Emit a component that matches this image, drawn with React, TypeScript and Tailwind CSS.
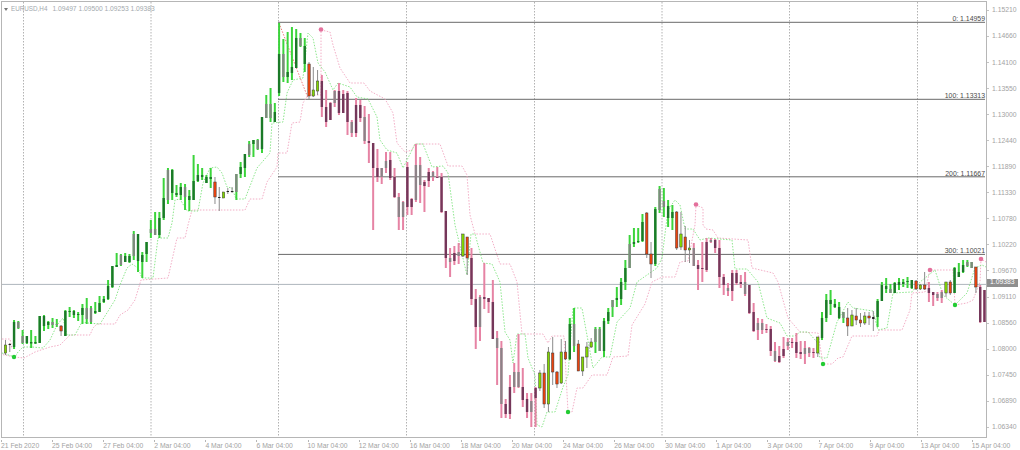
import React from 'react';

type Kind = 'g' | 'h' | 'p' | 'q' | 'l' | 'r' | 'k';
// kind, wick top, body top, body bottom, wick bottom (page pixels)
type Candle = [Kind, number, number, number, number];

const candles: Candle[] = [
  ['l',340,345,353,355],['k',343,344,345,352],['g',320,322,347,349],['h',321,322,328,329],['h',330,336,343,344],
  ['g',336,336,343,344],['g',330,342,343.5,348],['g',336,342,343.5,344],['g',316,316,343,343],['g',315,316,326,331],
  ['g',321,322,325,329],['h',318,322,325,328],['h',319,324,325,327],['r',325,326,331,336],['g',310,311,336,336],
  ['g',307,311,312,317],['g',310,311,315,318],['g',312,314,315,321],['g',304,308,315,324],['h',298,308,319,324],
  ['h',306,308,322,324],['g',302,311,313,314],['g',296,303,312,312],['g',296,299,302,303],['g',280,286,299,300],
  ['g',266,266,287,288],['g',253,265,267,267],['h',254,255,265,266],['g',253,256,262,262],['g',254,256,262,263],
  ['h',231,234,256,260],['g',234,234,261,272],['g',252,255,262,278],['g',242,242,254,262],['h',220,229,233,238],
  ['h',212,229,235,235],['g',212,218,235,238],['g',178,198,218,220],['h',168,170,200,204],['g',169,170,193,200],
  ['g',185,193,195,197],['g',183,187,195,200],['h',184,187,197,210],['g',190,196,200,211],['g',155,181,200,200],
  ['g',164,175,181,182],['g',168,175,177,180],['g',175,177,183,183],['g',168,177,179,188],['r',177,182,197,204],
  ['k',187,197,198,211],['l',192,192,198,198],['k',188,191,192,194],['k',187,191,192,193],['h',174,174,192,200],
  ['g',162,167,174,178],['g',154,154,168,177],['h',141,144,155,157],['g',140,140,144,157],['h',139,140,149,150],
  ['g',117,117,149,153],['h',95,104,118,118],['h',88,104,118,122],['g',103,112,122,122],['g',23,54,93,96],
  ['h',39,54,77,82],['g',32,72,77,83],['g',27,67,73,80],['g',29,38,68,68],['h',33,38,46,47],
  ['g',38,46,64,72],['r',62,64,96,100],['l',67,90,96,97],['l',70,81,91,95],['p',75,81,107,117],
  ['p',90,107,122,127],['p',102,103,120,120],['q',90,91,103,107],['p',83,91,113,115],['p',90,94,113,113],
  ['p',91,93,122,135],['q',120,122,133,137],['p',98,105,133,137],['p',100,105,118,122],['q',106,117,141,144],
  ['p',114,141,143,163],['p',143,143,168,230],['p',149,168,177,182],['q',168,168,177,184],['q',152,161,168,173],
  ['p',152,160,178,180],['p',168,177,197,198],['q',193,197,217,230],['q',201,202,217,230],['p',162,167,207,215],
  ['p',198,199,207,215],['q',144,165,200,202],['q',157,165,185,203],['p',180,182,186,212],['p',168,172,181,187],
  ['q',171,172,177,181],['p',167,177,177.8,178],['p',173,177,212,213],['p',211,211,258,268],['q',248,258,262,277],
  ['p',246,253,261,265],['q',243,252,256,264],['l',234,234,256,257],['r',237,237,258,275],['p',248,258,299,305],
  ['p',289,299,327,349],['q',295,297,327,341],['p',263,297,299,309],['p',298,298,302,313],['p',280,302,339,339],
  ['q',331,338,348,385],['q',341,348,404,418],['p',399,404,414,418],['p',375,387,414,419],['q',363,372,387,393],
  ['q',334,372,387,388],['p',368,387,400,407],['p',393,399,412,418],['q',393,401,412,427],['p',387,388,398,427],
  ['l',370,373,388,391],['r',364,373,404,408],['l',347,352,404,412],['r',337,353,372,385],['r',371,372,384,388],
  ['l',339,352,383,384],['r',341,352,359,360],['g',318,324,359,360],['h',308,324,346,352],['r',340,344,371,371],
  ['l',357,357,371,376],['l',342,347,357,368],['l',338,342,347,348],['h',327,329,342,353],['h',327,329,351,351],
  ['g',318,321,351,357],['g',308,312,321,324],['h',300,300,307,317],['g',287,298,300,307],['g',278,282,299,305],
  ['g',260,268,282,290],['h',235,244,268,268],['g',228,242,244,247],['g',228,241,242,243],['g',214,222,241,242],
  ['r',212,213,254,258],['r',242,254,264,278],['g',207,209,264,266],['h',186,189,210,213],['h',188,201,207,217],
  ['g',200,206,218,227],['g',205,212,218,230],['r',211,212,248,250],['l',212,234,247,250],['r',226,237,250,262],
  ['l',240,248,250,263],['q',243,248,266,266],['p',260,265,269,290],['p',242,268,269,282],['p',238,242,270,272],
  ['q',238,240,242,243],['p',239,240,248,253],['p',240,248,277,288],['p',274,277,285,295],['q',283,288,291,296],
  ['p',270,273,291,301],['p',270,273,283,285],['p',275,282,284,288],['q',272,282,294,296],['p',285,285,313,314],
  ['p',303,312,331,332],['q',318,323,330,340],['q',319,323,330,334],['p',324,329,330,333],['p',326,329,351,356],
  ['q',342,351,361,362],['p',346,356,362,363],['p',337,349,356,358],['q',338,342,346,350],['p',338,342,343,348],
  ['p',333,342,353,358],['p',341,352,354,359],['q',341,348,354,364],['q',347,348,353,357],['p',348,352,353,358],
  ['l',337,337,353,357],['g',312,318,338,340],['g',294,300,318,322],['g',290,300,304,315],['g',299,304,307,308],
  ['g',302,307,318,319],['h',312,312,318,323],['r',308,318,326,336],['l',310,315,326,326],['r',308,316,320,325],
  ['r',313,320,323,327],['l',312,316,323,325],['r',312,316,318,325],['k',311,317,319,331],['g',299,301,317,327],
  ['g',282,285,301,301],['g',278,286,289,293],['h',284,289,293,293],['g',282,283,293,293],['g',278,282,285,290],
  ['g',279,282,284,287],['g',277,281,282,288],['g',280,280,288,289],['r',280,281,289,290],['l',284,285,289,290],
  ['r',272,285,289,290],['p',282,288,293,302],['p',292,292,295,306],['q',292,294,298,301],['q',290,292,298,303],
  ['l',282,282,293,297],['r',280,282,293,295],['g',267,268,293,293],['g',263,272,277,277],['g',260,265,272,273],
  ['h',260,262,266,267],['h',262,262,268,268],['r',267,267,287,293],['p',285,287,322,323],['p',290,290,322,322],
];

const bodyStyle: Record<Kind, { wick: string; fill: string; stroke?: string }> = {
  g: { wick: '#3bd43b', fill: '#1b7a28' },
  h: { wick: '#3bd43b', fill: '#7d8a7d' },
  p: { wick: '#e683a4', fill: '#75375a' },
  q: { wick: '#e683a4', fill: '#8d8287' },
  l: { wick: '#8c8c8c', fill: '#82d600', stroke: '#3a3a3a' },
  r: { wick: '#8c8c8c', fill: '#ea430e', stroke: '#3a3a3a' },
  k: { wick: '#8c8c8c', fill: '#222222' },
};

const pinkLine = [
  '0,354 14,357 24,358 35,352 50,347 60,345 65,340 70,335 90,335 93,328 97,324 115,324 120,315 128,310 135,300 141,280 168,278 177,238 185,238 188,225 192,210 245,210 250,199 262,199 267,182 277,167 278,153 287,153 292,123 300,122 303,103 308,95 321,95 321,30 330,32 333,45 340,68 350,83 364,83 370,91 385,99 393,113 397,143 405,152 412,150 415,144 440,144 448,166 462,166 467,175 470,215 475,234 490,234 500,264 510,264 517,282 522,334 543,334 548,343 552,336 564,336 568,412 572,412 577,388 583,388 592,375 607,375 613,357 628,356 632,325 645,304 652,282 662,277 675,277 680,262 688,261 695,225 696,205 703,208 703,225 706,229 713,230 718,238 748,240 752,268 773,273 778,282 788,318 800,332 818,333 823,364 832,364 838,358 843,357 852,336 877,336 879,330 902,330 910,310 912,293 925,292 930,270 953,270 955,305 967,303 973,300 980,282 981,259 986,262',
  '2,339 10,339 12,349',
];

const greenLine =
  '2,353 15,357 18,352 23,347 32,347 43,348 50,340 57,325 63,318 67,335 75,335 82,322 88,323 100,324 115,300 120,285 127,268 132,264 138,268 142,278 153,278 158,238 168,238 172,223 175,200 180,199 187,211 198,211 203,183 210,168 217,167 222,173 227,187 232,188 236,199 245,199 257,168 270,153 272,123 283,122 287,93 293,80 303,78 308,33 313,38 318,63 325,72 333,90 338,83 350,87 357,97 368,99 377,117 380,140 387,150 397,153 403,168 415,144 423,144 432,167 443,166 448,173 455,225 467,275 471,234 475,234 483,263 492,264 500,282 505,332 510,340 513,363 517,334 525,334 528,358 535,375 537,425 542,427 547,412 555,412 563,387 568,375 573,308 582,308 593,368 602,357 610,357 617,322 630,308 637,282 657,268 662,258 668,210 675,200 680,205 685,229 693,229 700,240 708,238 732,240 735,269 747,269 758,282 767,318 780,323 787,336 795,336 800,332 808,332 817,342 820,358 827,358 837,322 848,302 853,308 873,311 878,330 887,328 893,293 912,292 920,282 935,270 943,295 955,305 967,293 975,268 982,265 986,267';

const gridX = [23.5, 151, 278.5, 406.5, 534.5, 662, 789.5, 917.5];
const fibLevels = [
  { y: 22.3, label: '0: 1.14959' },
  { y: 99.3, label: '100: 1.13313' },
  { y: 176.8, label: '200: 1.11667' },
  { y: 254.4, label: '300: 1.10021' },
];
const prices = [
  '1.15210', '1.14660', '1.14100', '1.13550', '1.13000', '1.12440', '1.11890', '1.11330', '1.10780',
  '1.10220', '1.09670', '1.09110', '1.08560', '1.08000', '1.07450', '1.06890', '1.06340',
];
const times = [
  '21 Feb 2020', '25 Feb 04:00', '27 Feb 04:00', '2 Mar 04:00', '4 Mar 04:00', '6 Mar 04:00', '10 Mar 04:00',
  '12 Mar 04:00', '16 Mar 04:00', '18 Mar 04:00', '20 Mar 04:00', '24 Mar 04:00', '26 Mar 04:00', '30 Mar 04:00',
  '1 Apr 04:00', '3 Apr 04:00', '7 Apr 04:00', '9 Apr 04:00', '13 Apr 04:00', '15 Apr 04:00',
];

const Chart = () => (
  <svg className="block h-full w-full" viewBox="2 2 984 435">
    {gridX.map((x) => (
      <line key={x} x1={x} x2={x} y1={2} y2={437} stroke="#a9a9a9" strokeWidth={0.9} strokeDasharray="1.5 1.5" />
    ))}
    <line x1={2} x2={986} y1={284.4} y2={284.4} stroke="#aeb6bc" strokeWidth={1} />
    {fibLevels.map((f) => (
      <line key={f.y} x1={278} x2={985} y1={f.y} y2={f.y} stroke="#6a6a6a" strokeWidth={1} />
    ))}
    <line x1={279} y1={23} x2={308} y2={98} stroke="#e8585a" strokeWidth={0.8} strokeDasharray="1.5 1.5" />

    {pinkLine.map((pts) => (
      <polyline key={pts} points={pts} fill="none" stroke="#f0a5c0" strokeWidth={0.9} strokeDasharray="1.5 1.5" />
    ))}
    <polyline points={greenLine} fill="none" stroke="#7fe37f" strokeWidth={0.9} strokeDasharray="1.5 1.5" />

    {candles.map(([kind, high, top, bottom, low], i) => {
      const x = 5.5 + i * 4.275;
      const s = bodyStyle[kind];
      const thin = kind === 'l' || kind === 'r' || kind === 'k';
      return (
        <g key={i}>
          <line x1={x} x2={x} y1={high} y2={low} stroke={s.wick} strokeWidth={thin ? 1 : 2} />
          <rect x={x - 1.2} y={top} width={2.4} height={Math.max(bottom - top, 0.9)} fill={s.fill} stroke={s.stroke} strokeWidth={s.stroke ? 0.5 : 0} />
        </g>
      );
    })}

    {[[321, 29.5], [696, 204.5], [930, 270], [981, 259]].map(([cx, cy]) => (
      <circle key={cx} cx={cx} cy={cy} r={2.3} fill="#e4709c" />
    ))}
    {[[14, 357], [568, 412], [823, 364], [955, 305]].map(([cx, cy]) => (
      <circle key={cx} cx={cx} cy={cy} r={2.2} fill="#22cc33" />
    ))}

    {fibLevels.map((f) => (
      <text key={f.label} x={985} y={f.y - 1} textAnchor="end" fontSize={6.9} fill="#4a4a4a">
        {f.label}
      </text>
    ))}
  </svg>
);

export default function App() {
  return (
    <div className="h-[450px] w-[1020px] overflow-hidden bg-white pt-px font-['Liberation_Sans',Arial,sans-serif] text-[6.8px] text-[#a3a3a3]">
      <div className="flex pl-px">
        <div className="relative h-[437px] w-[986px] border border-[#b6b6b6]">
          <Chart />
          <div className="absolute left-[2px] top-[2px] flex items-center text-[#a3a9ae]">
            <span className="h-0 w-0 border-x-[2.5px] border-t-[3px] border-x-transparent border-t-[#777]" />
            <span className="ml-[3px] text-[6.3px]">EURUSD,H4</span>
            <span className="ml-[5px] text-[6.7px]">1.09497 1.09500 1.09253 1.09383</span>
          </div>
        </div>
        <div className="relative -mt-[3.5px] flex flex-col">
          {prices.map((p) => (
            <div key={p} className="flex h-[26.06px] items-center">
              <span className="mr-[3px] h-px w-[2px] bg-[#c4c4c4]" />
              {p}
            </div>
          ))}
          <div className="absolute left-0 top-[281px] flex h-[8px] w-[31px] items-center bg-[#8f8f8f] pl-[3px] text-white">
            1.09383
          </div>
        </div>
      </div>
      <div className="flex">
        {times.map((t) => (
          <div key={t} className="w-[51.1px] shrink-0 pl-px">
            <div className="h-[2px] w-px bg-[#b6b6b6]" />
            <div className="whitespace-nowrap leading-[8px]">{t}</div>
          </div>
        ))}
      </div>
    </div>
  );
}
